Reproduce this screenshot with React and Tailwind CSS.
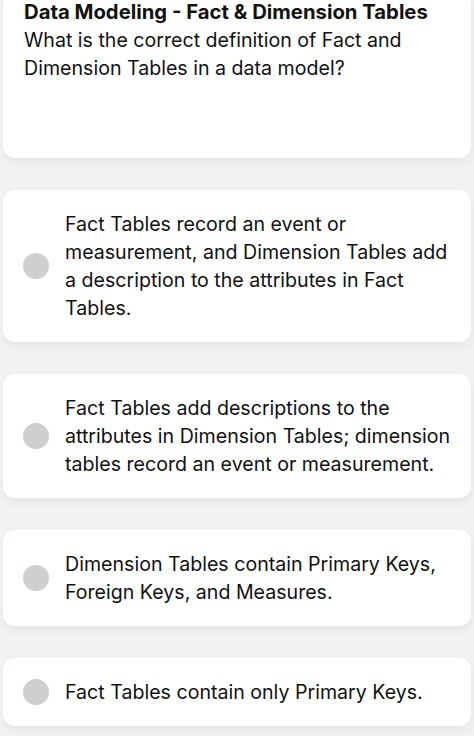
import React, { useState } from 'react';

const options = [
  'Fact Tables record an event or measurement, and Dimension Tables add a description to the attributes in Fact Tables.',
  'Fact Tables add descriptions to the attributes in Dimension Tables; dimension tables record an event or measurement.',
  'Dimension Tables contain Primary Keys, Foreign Keys, and Measures.',
  'Fact Tables contain only Primary Keys.',
];

function Option({ text, selected, onSelect }) {
  return (
    <button
      onClick={onSelect}
      className="flex w-full items-center gap-4 rounded-xl bg-white py-5 pl-5 pr-4 text-left shadow-[0_4px_10px_rgba(0,0,0,0.06)]"
    >
      <span
        className={`h-[26px] w-[26px] shrink-0 rounded-full ${selected ? 'bg-[#3b82f6]' : 'bg-[#d1cfcd]'}`}
      />
      <span className="text-[19.6px] leading-[28px] text-[#111111]">{text}</span>
    </button>
  );
}

export default function App() {
  const [selected, setSelected] = useState(null);

  return (
    <div
      className="min-h-screen bg-[#f4f2f1] px-[3px] pb-4"
      style={{ fontFamily: 'Inter, "Noto Sans", sans-serif' }}
    >
      {/* question card */}
      <div className="flex h-[158px] flex-col rounded-b-xl bg-white pl-[21px] pr-4 shadow-[0_4px_10px_rgba(0,0,0,0.06)]">
        <h1 className="-mt-[2px] text-[20.3px] font-bold leading-[28px] text-[#111111]">
          Data Modeling - Fact &amp; Dimension Tables
        </h1>
        <p className="text-[19.6px] leading-[28px] text-[#111111]">
          What is the correct definition of Fact and Dimension Tables in a data model?
        </p>
      </div>

      <div className="mt-8 flex flex-col gap-8">
        {options.map((text, i) => (
          <Option key={i} text={text} selected={selected === i} onSelect={() => setSelected(i)} />
        ))}
      </div>
    </div>
  );
}
